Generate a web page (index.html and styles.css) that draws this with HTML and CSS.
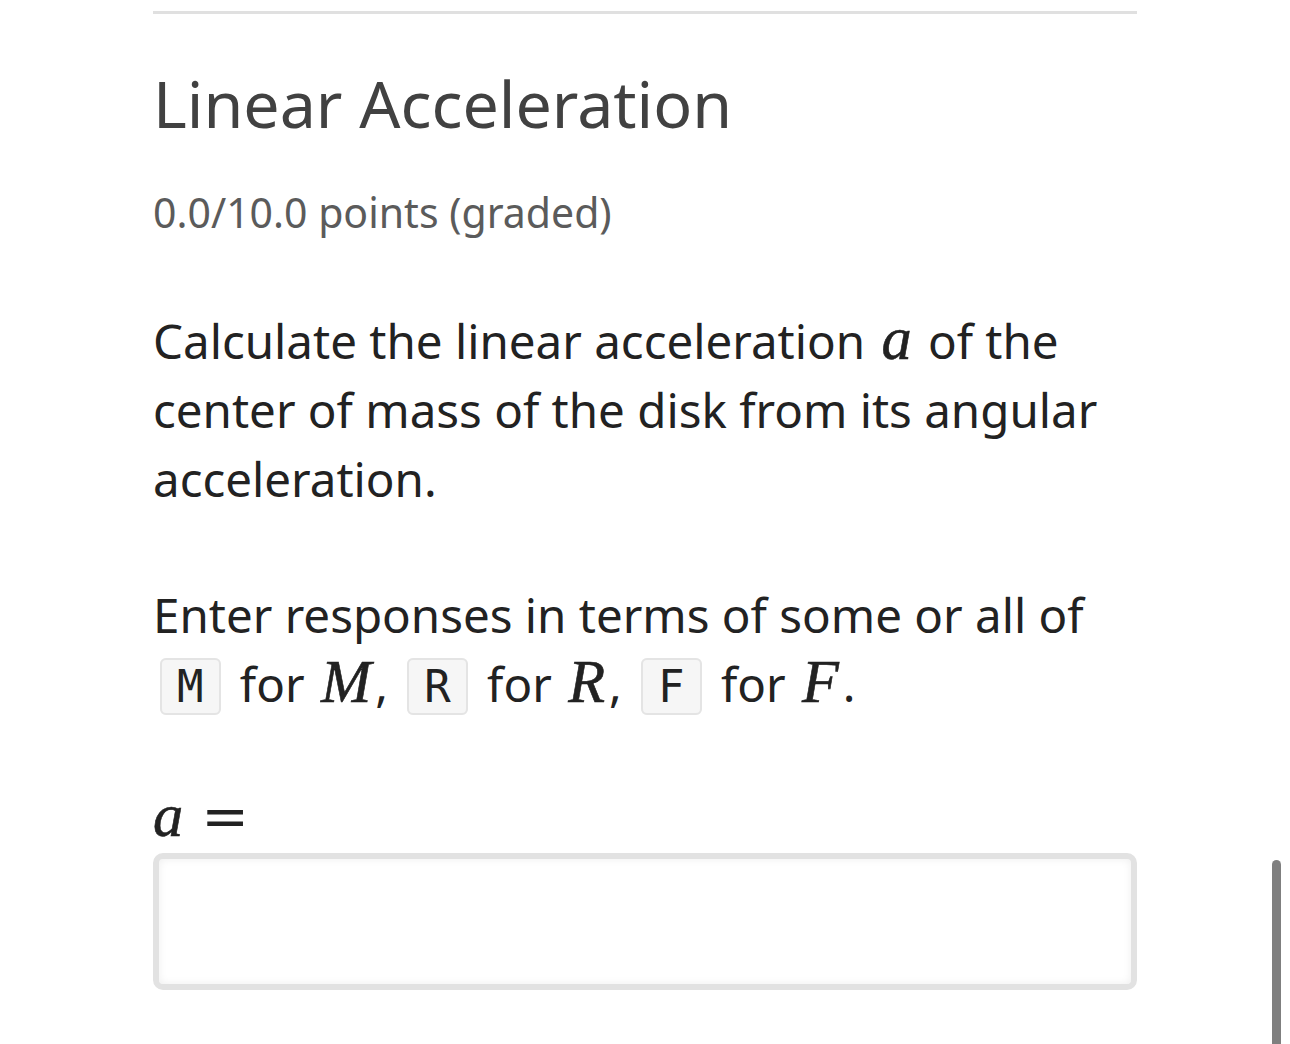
FILE: index.html
```html
<!DOCTYPE html>
<html lang="en">
<head>
<meta charset="utf-8">
<title>Linear Acceleration</title>
<link rel="stylesheet" href="styles.css">
</head>
<body>
<main class="problem">
  <hr class="rule">
  <h2 class="title">Linear Acceleration</h2>
  <div class="points">0.0/10.0 points (graded)</div>
  <p class="text">Calculate the linear acceleration <span class="math">a</span> of the center of mass of the disk from its angular acceleration.</p>
  <p class="text">Enter responses in terms of some or all of <code class="code">M</code> for <span class="math">M</span>, <code class="code">R</code> for <span class="math">R</span>, <code class="code">F</code> for <span class="math">F</span>.</p>
  <div class="label"><span class="math">a</span><span class="eq">=</span></div>
  <div class="input"></div>
</main>
<div class="scrollbar"></div>
</body>
</html>
```
FILE: styles.css
```css
html, body {
  margin: 0;
  padding: 0;
  background: #ffffff;
}
body {
  font-family: "Noto Sans", "Open Sans", sans-serif;
  color: #222222;
}
.problem {
  width: 984px;
  margin-left: 153px;
  padding-top: 11px;
}
.rule {
  margin: 0;
  border: 0;
  height: 3px;
  background: #e0e0e0;
}
.title {
  margin: 49px 0 0;
  font-size: 64.5px;
  line-height: 80px;
  font-weight: 400;
  color: #414141;
}
.points {
  margin-top: 39px;
  font-size: 41px;
  line-height: 60px;
  color: #5b5b5b;
}
.text {
  margin: 64px 0 0;
  font-size: 47.5px;
  line-height: 69px;
  color: #222222;
}
.text + .text {
  margin-top: 67px;
}
.math {
  font-family: "Liberation Serif", "DejaVu Serif", serif;
  font-style: italic;
  font-size: 1.27em;
  line-height: 1;
  margin: 0 4px 0 4px;
  -webkit-text-stroke: 0.6px currentColor;
}
.code {
  font-family: "DejaVu Sans Mono", "Liberation Mono", monospace;
  font-size: 44px;
  line-height: 1;
  background: #f6f6f6;
  border: 2px solid #e4e4e4;
  border-radius: 6px;
  padding: 1px 15px;
  margin: 0 7px 0 7px;
  color: #222222;
}
.label {
  margin-top: 65px;
  font-size: 47.5px;
  line-height: 69px;
}
.label .math {
  margin: 0;
}
.eq {
  font-family: "DejaVu Serif", "Liberation Serif", serif;
  font-size: 1.2em;
  line-height: 1;
  margin-left: 18px;
}
.input {
  height: 125px;
  margin-top: 1px;
  border: 6px solid #e2e2e2;
  border-radius: 10px;
  background: #ffffff;
  box-shadow: inset 0 0 8px rgba(0, 0, 0, 0.07);
}
.scrollbar {
  position: fixed;
  left: 1272px;
  top: 860px;
  width: 9px;
  height: 200px;
  border-radius: 5px;
  background: #7f7f7f;
}
```
